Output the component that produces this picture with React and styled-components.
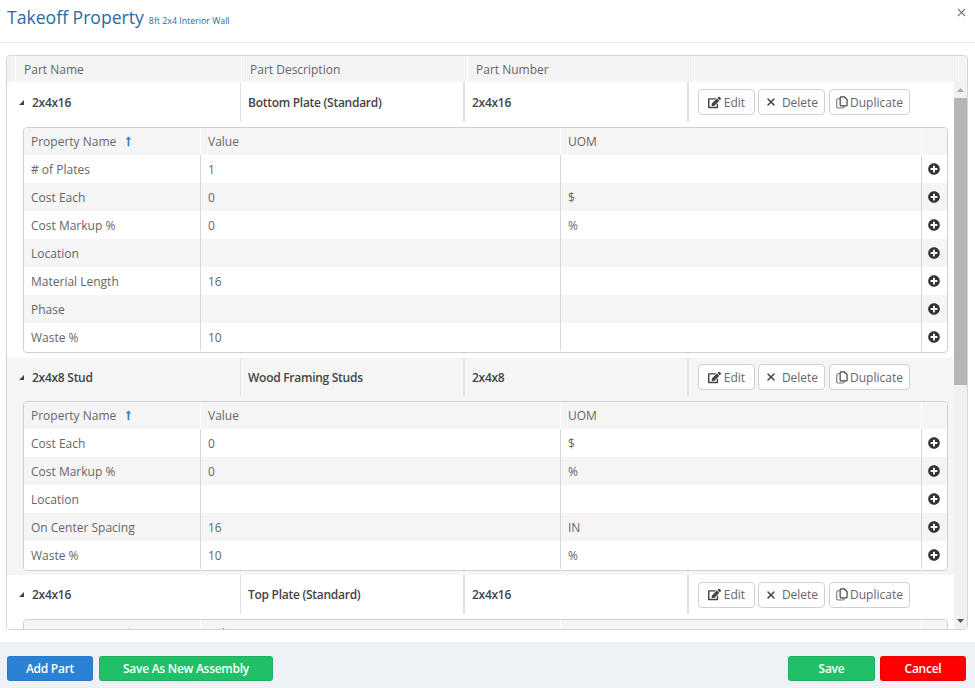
import React from "react";
import styled, { createGlobalStyle } from "styled-components";
import { FaEdit, FaPlusCircle, FaLongArrowAltUp } from "react-icons/fa";
import { X } from "lucide-react";

const Global = createGlobalStyle`
  html, body { margin: 0; padding: 0; background: #fff; }
  body { font-family: "Open Sans", "Liberation Sans", sans-serif; font-size: 12px; color: #555; }
  * { box-sizing: border-box; }
`;

const Dialog = styled.div`
  width: 975px; height: 688px; display: flex; flex-direction: column; background: #fff; overflow: hidden;
`;
const Header = styled.header`
  height: 43px; flex: none; border-bottom: 1px solid #e6e9f0; display: flex; align-items: flex-start;
  justify-content: space-between; padding: 5px 7px 0 7px;
`;
const TitleLine = styled.div`display: flex; align-items: baseline; gap: 5px;`;
const Title = styled.h1`margin: 0; font-size: 17.6px; line-height: 25px; font-weight: 400; color: #2a6aa5;`;
const Subtitle = styled.span`font-size: 8.8px; color: #2a6aa5;`;
const Close = styled.span`display: flex; color: #777; margin-top: 1px;`;

const Body = styled.main`flex: 1; min-height: 0; padding: 12px 7px 12px 6px;`;
const Grid = styled.div`
  height: 100%; border: 1px solid #d5d5d5; border-radius: 4px; overflow: hidden; display: flex; flex-direction: column;
`;
const GridHead = styled.div`
  height: 26px; flex: none; display: grid; grid-template-columns: 9px 226px 226px 227px 264px 1fr; background: #f4f4f4;
`;
const HeadCell = styled.div`
  padding-left: 8px; line-height: 27px; color: #666; border-right: 1px solid #fff; white-space: nowrap;
`;
const GridBody = styled.div`flex: 1; min-height: 0; display: flex;`;
const Rows = styled.div`flex: 1; min-width: 0; overflow: hidden;`;

const PartGroup = styled.section`background: ${p => (p.$alt ? "#f5f5f5" : "#fff")}; padding-bottom: ${p => p.$gap}px;`;
const PartRow = styled.div`
  height: ${p => p.$h}px; padding-bottom: ${p => p.$pb}px; display: grid; grid-template-columns: 234px 224px 224px 1fr; align-items: stretch;
`;
const PartCell = styled.div`
  display: flex; align-items: center; padding-left: 7px; letter-spacing: -0.27px; font-weight: 600; color: #444; border-right: 2px solid #e2e2e2;
  &:first-child { padding-left: 12px; gap: 8px; border-right-width: 1px; }
`;
const ActionCell = styled.div`display: flex; align-items: center; padding: 0 0 0 9px;`;
const Arrow = styled.svg`width: 5px; height: 5px; flex: none; fill: #444;`;
const Action = styled.button`
  width: ${p => p.$w}px; height: 26px; margin-right: ${p => p.$mr}px; padding: 0; font: inherit; color: #666; background: #fff;
  border: 1px solid #d0d0d0; border-radius: 4px; display: inline-flex; align-items: center; justify-content: center;
  gap: ${p => p.$gap}px; flex: none;
  svg { color: #444; flex: none; }
`;

const Detail = styled.div`padding: ${p => p.$top}px 6px 0 16px;`;
const Nested = styled.div`border: 1px solid #d0d0d0; border-radius: 4px; overflow: hidden; background: #fff; padding-bottom: 1px;`;
const NestedRow = styled.div`
  display: grid; grid-template-columns: 177px 360px 361px 1fr; height: ${p => (p.$head ? "27px" : "28px")};
  background: ${p => (p.$head || p.$stripe ? "#f5f5f5" : "#fff")};
`;
const NestedCell = styled.div`
  padding-left: 7px; display: flex; align-items: center; gap: 7px; color: #666;
  border-right: 1px solid ${p => (p.$head ? "#fff" : "#d8d8d8")};
  &:last-child { border-right: none; padding-left: 6px; }
`;
const Sort = styled.span`display: flex; color: #2f86d0; font-size: 11px;`;
const Add = styled.span`display: flex; color: #333; font-size: 12px;`;

const ScrollBar = styled.div`width: 13px; flex: none; background: #f1f1f1; display: flex; flex-direction: column;`;
const ScrollArrow = styled.div`height: 16px; flex: none; display: flex; align-items: center; justify-content: center;`;
const ScrollThumb = styled.div`height: 287px; flex: none; background: #b5b5b5;`;
const ScrollTrack = styled.div`flex: 1;`;

const Footer = styled.footer`
  height: 46px; flex: none; background: #eef1f6; display: flex; align-items: center; justify-content: space-between; padding: 6px 9px 0 7px;
`;
const ButtonGroup = styled.div`display: flex; gap: ${p => p.$gap}px;`;
const Button = styled.button`
  width: ${p => p.$w}px; height: 25px; border: 1px solid rgba(0,0,0,0.06); border-radius: 3px; color: #fff; background: ${p => p.$bg};
  font: inherit; letter-spacing: -0.27px; font-weight: 600; padding: 0;
`;

const Triangle = () => <Arrow viewBox="0 0 5 5"><path d="M5 0V5H0Z" /></Arrow>;
const DuplicateIcon = () => (
  <svg width="12" height="13" viewBox="0 0 13 14" fill="none">
    <path d="M4.5 3H2A1.2 1.2 0 0 0 .8 4.2v7.6A1.2 1.2 0 0 0 2 13h5.5a1.2 1.2 0 0 0 1.2-1.2V11" stroke="#777" strokeWidth="1.2" />
    <path d="M5.5 1h3.6L12 3.8v5.9a1 1 0 0 1-1 1H5.5a1 1 0 0 1-1-1V2a1 1 0 0 1 1-1Z" stroke="#444" strokeWidth="1.3" />
  </svg>
);

const parts = [
  { name: "2x4x16", desc: "Bottom Plate (Standard)", num: "2x4x16", h: 40, pb: 0, top: 5, gap: 5, props: [
    ["# of Plates", "1", ""], ["Cost Each", "0", "$"], ["Cost Markup %", "0", "%"], ["Location", "", ""],
    ["Material Length", "16", ""], ["Phase", "", ""], ["Waste %", "10", ""] ] },
  { name: "2x4x8 Stud", desc: "Wood Framing Studs", num: "2x4x8", alt: true, h: 39, pb: 1, top: 4, gap: 4, props: [
    ["Cost Each", "0", "$"], ["Cost Markup %", "0", "%"], ["Location", "", ""],
    ["On Center Spacing", "16", "IN"], ["Waste %", "10", "%"] ] },
  { name: "2x4x16", desc: "Top Plate (Standard)", num: "2x4x16", h: 39, pb: 0, top: 5, gap: 5, props: [["Cost Each", "0", "$"]] },
];

export default function App() {
  return (
    <Dialog>
      <Global />
      <Header>
        <TitleLine><Title>Takeoff Property</Title><Subtitle>8ft 2x4 Interior Wall</Subtitle></TitleLine>
        <Close><X size={13} strokeWidth={2} /></Close>
      </Header>
      <Body>
        <Grid>
          <GridHead>
            <HeadCell />
            <HeadCell>Part Name</HeadCell>
            <HeadCell>Part Description</HeadCell>
            <HeadCell>Part Number</HeadCell>
            <HeadCell />
            <HeadCell />
          </GridHead>
          <GridBody>
            <Rows>
              {parts.map((part, i) => (
                <PartGroup key={i} $alt={part.alt} $gap={part.gap}>
                  <PartRow $h={part.h} $pb={part.pb}>
                    <PartCell><Triangle />{part.name}</PartCell>
                    <PartCell>{part.desc}</PartCell>
                    <PartCell>{part.num}</PartCell>
                    <ActionCell>
                      <Action $w={57} $mr={3} $gap={3}><FaEdit size={13} />Edit</Action>
                      <Action $w={67} $mr={4} $gap={5}><X size={12} strokeWidth={3} />Delete</Action>
                      <Action $w={81} $mr={0} $gap={2}><DuplicateIcon />Duplicate</Action>
                    </ActionCell>
                  </PartRow>
                  <Detail $top={part.top}>
                    <Nested>
                      <NestedRow $head>
                        <NestedCell $head>Property Name <Sort><FaLongArrowAltUp /></Sort></NestedCell>
                        <NestedCell $head>Value</NestedCell>
                        <NestedCell $head>UOM</NestedCell>
                        <NestedCell $head />
                      </NestedRow>
                      {part.props.map((row, j) => (
                        <NestedRow key={j} $stripe={j % 2 === 1}>
                          <NestedCell>{row[0]}</NestedCell>
                          <NestedCell>{row[1]}</NestedCell>
                          <NestedCell>{row[2]}</NestedCell>
                          <NestedCell><Add><FaPlusCircle /></Add></NestedCell>
                        </NestedRow>
                      ))}
                    </Nested>
                  </Detail>
                </PartGroup>
              ))}
            </Rows>
            <ScrollBar>
              <ScrollArrow><svg width="7" height="4" viewBox="0 0 7 4"><path d="M3.5 0L7 4H0Z" fill="#aaa" /></svg></ScrollArrow>
              <ScrollThumb />
              <ScrollTrack />
              <ScrollArrow><svg width="7" height="4" viewBox="0 0 7 4"><path d="M0 0H7L3.5 4Z" fill="#555" /></svg></ScrollArrow>
            </ScrollBar>
          </GridBody>
        </Grid>
      </Body>
      <Footer>
        <ButtonGroup $gap={6}>
          <Button $w={86} $bg="#2b82d4">Add Part</Button>
          <Button $w={174} $bg="#21bf67">Save As New Assembly</Button>
        </ButtonGroup>
        <ButtonGroup $gap={5}>
          <Button $w={87} $bg="#21bf67">Save</Button>
          <Button $w={86} $bg="#ff0000">Cancel</Button>
        </ButtonGroup>
      </Footer>
    </Dialog>
  );
}
